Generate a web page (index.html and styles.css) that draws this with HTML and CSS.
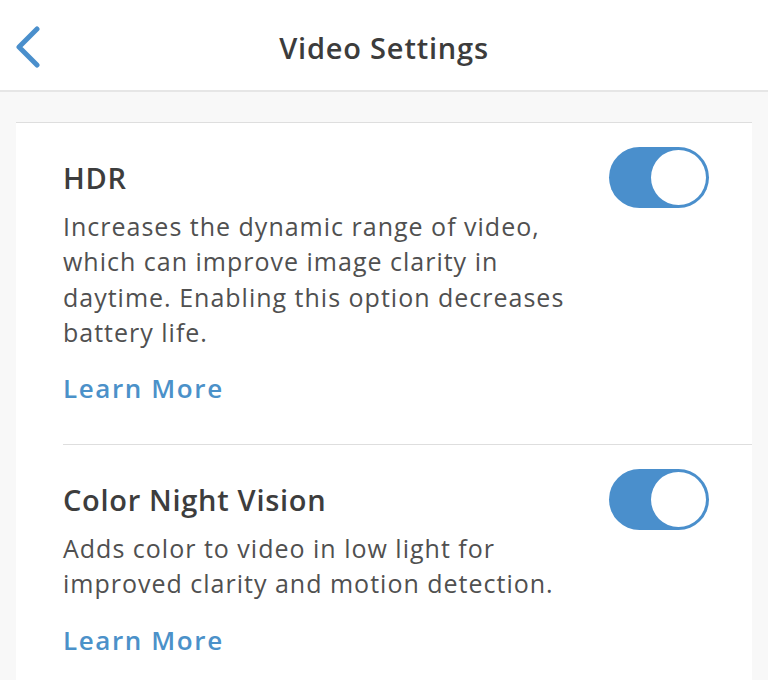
FILE: index.html
```html
<!DOCTYPE html>
<html lang="en">
<head>
    <meta charset="UTF-8">
    <title>Video Settings</title>
    <link rel="stylesheet" href="styles.css">
</head>
<body>
<div class="header">
    <span class="back">
        <svg width="28" height="42" viewBox="0 0 28 42"><path d="M22 3 L4 21 L22 39" fill="none" stroke="#4a8fcc" stroke-width="5" stroke-linecap="round" stroke-linejoin="round"/></svg>
    </span>
    <h1 class="title">Video Settings</h1>
</div>
<div class="content">
    <div class="card">
        <div class="item">
            <div class="text">
                <h2>HDR</h2>
                <p>Increases the dynamic range of video, which can improve image clarity in daytime. Enabling this option decreases battery life.</p>
                <a href="#">Learn More</a>
            </div>
            <span class="toggle on"><span class="knob"></span></span>
        </div>
        <div class="item">
            <div class="text">
                <h2>Color Night Vision</h2>
                <p>Adds color to video in low light for improved clarity and motion detection.</p>
                <a href="#">Learn More</a>
            </div>
            <span class="toggle on"><span class="knob"></span></span>
        </div>
    </div>
</div>
</body>
</html>
```

FILE: styles.css
```css
* {
    margin: 0;
    padding: 0;
    box-sizing: border-box;
}

body {
    background: #f8f8f8;
    font-family: "Open Sans", Lato, sans-serif;
    color: #444;
}

.header {
    height: 92px;
    background: #fff;
    border-bottom: 2px solid #e6e6e6;
    display: flex;
    align-items: center;
    justify-content: center;
    position: relative;
}

.back {
    position: absolute;
    left: 15px;
    top: 26px;
    width: 28px;
    height: 42px;
}

.title {
    font-size: 29px;
    font-weight: 600;
    letter-spacing: 0.8px;
    color: #3c3c3c;
    margin-top: 4px;
}

.content {
    padding: 30px 16px 0;
}

.card {
    background: #fff;
    border-top: 1px solid #dedede;
}

.item {
    display: flex;
    justify-content: space-between;
    align-items: flex-start;
    margin-left: 47px;
    padding: 24px 43px 0 0;
}

.item + .item {
    border-top: 1px solid #dedede;
}

.text {
    flex: 1;
    padding-bottom: 38px;
}

.text h2 {
    font-size: 29px;
    font-weight: 600;
    letter-spacing: 0.7px;
    color: #3d3d3d;
    line-height: 36px;
    margin-top: 13px;
}

.text p {
    font-size: 25px;
    line-height: 35.3px;
    letter-spacing: 1px;
    color: #505050;
    margin-top: 13px;
    max-width: 520px;
}

.text a {
    display: block;
    width: fit-content;
    font-size: 26px;
    line-height: 36px;
    font-weight: 600;
    letter-spacing: 1.6px;
    color: #4b91c9;
    text-decoration: none;
    margin-top: 20px;
}

.toggle {
    width: 100px;
    height: 61px;
    border-radius: 31px;
    background: #4a8fcc;
    position: relative;
    flex-shrink: 0;
}

.toggle .knob {
    position: absolute;
    right: 3px;
    top: 3px;
    width: 55px;
    height: 55px;
    border-radius: 50%;
    background: #fff;
}
```
